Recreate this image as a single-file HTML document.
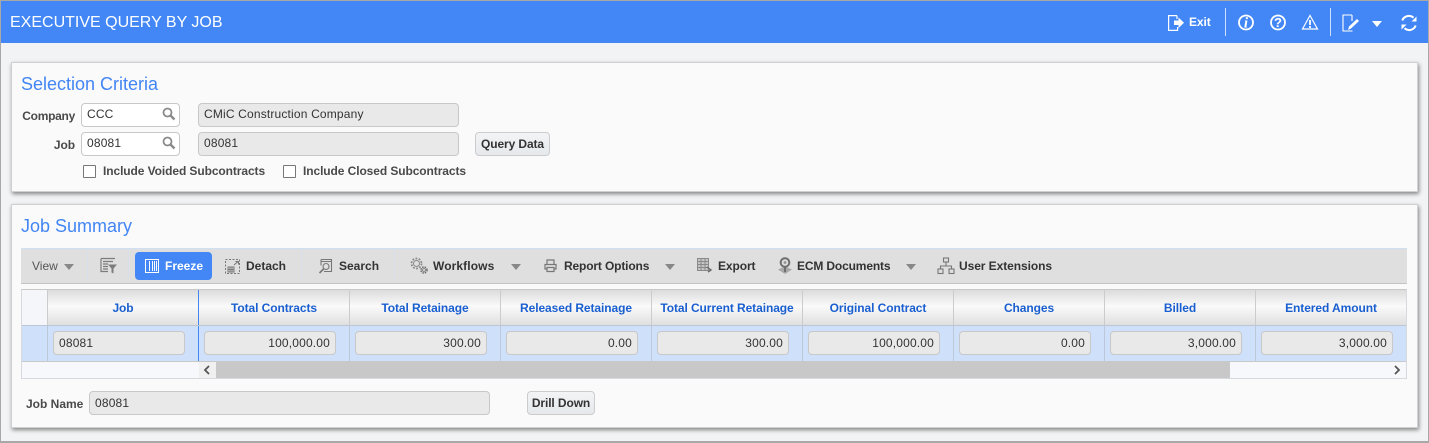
<!DOCTYPE html>
<html><head><meta charset="utf-8"><style>
*{box-sizing:border-box}
html,body{margin:0;padding:0}
body{width:1429px;height:443px;position:relative;overflow:hidden;background:#f1f3f4;font-family:"Liberation Sans",sans-serif;font-size:12px;color:#333}
.a{position:absolute;white-space:nowrap}
.panel{position:absolute;background:#fafafa;border:1px solid #d0d0d0;box-shadow:1px 2px 4px rgba(0,0,0,.45)}
.h{color:#4285f4;font-size:18px;line-height:20px}
.l{font-weight:bold;color:#4a4a4a;font-size:12px;line-height:14px;letter-spacing:-.09px}
.in{position:absolute;height:24px;border:1px solid #c8c8c8;border-radius:4px;background:#e9e9e9;font-size:12px;line-height:21px;padding:0 5px;color:#333;white-space:nowrap;letter-spacing:.17px}
.low{line-height:23px}
.w{background:#fff}
.btn{position:absolute;height:24px;border:1px solid #ccc;border-radius:4px;background:linear-gradient(#f2f4f6,#e6e9ec);font-weight:bold;font-size:12px;line-height:22px;text-align:center;color:#333;letter-spacing:-.1px}
.cb{position:absolute;width:13px;height:13px;border:1px solid #777;border-radius:1px;background:#fff}
.tb{font-weight:bold;font-size:12px;line-height:14px;color:#333;top:259px}
.tri{position:absolute;width:0;height:0;border-left:5px solid transparent;border-right:5px solid transparent;border-top:6px solid #888}
.th{position:absolute;top:290px;height:36px;border-right:1px solid #ccc;background:linear-gradient(#dcdcdc,#fafafa 45%,#dedede);color:#1a5fd0;font-weight:bold;font-size:12px;line-height:37px;text-align:center;letter-spacing:-.08px}
.td{position:absolute;top:326px;height:35px;border-right:1px solid #bcc8d8;background:#cfe0fb}
.r{text-align:right}
svg{position:absolute;overflow:visible}
</style></head><body>
<div class="a" style="left:0;top:0;width:1429px;height:443px;border:1px solid #a8a8a8;border-bottom-width:2px;z-index:5;pointer-events:none"></div>
<div class="a" style="left:1px;top:1px;width:1427px;height:42px;background:#4287f5"></div>
<div class="a" style="left:10px;top:13px;color:#fff;font-size:16px;line-height:19px">EXECUTIVE QUERY BY JOB</div>

<svg style="left:1168px;top:15px" width="18" height="16" fill="none" stroke="#fff" stroke-width="1.200"><path d="M9 .6H.6v14.800h9V12M9 .6V4"/><path d="M6 5.500h4.500V2.500L16 7.700l-5.500 5.300v-3H6z" fill="#fff" stroke="none"/></svg>
<div class="a" style="left:1189px;top:15px;color:#fff;font-weight:bold;font-size:12px;line-height:15px;letter-spacing:-.1px">Exit</div>
<div class="a" style="left:1225px;top:8px;width:1px;height:28px;background:#cfe0fb"></div>
<svg style="left:1237px;top:14px" width="18" height="18" fill="none" stroke="#fff" stroke-width="1.800"><circle cx="9" cy="8.500" r="7"/><text x="9" y="13.500" font-family="Liberation Serif" font-style="italic" font-weight="bold" font-size="15" fill="#fff" stroke="none" text-anchor="middle">i</text></svg>
<svg style="left:1269px;top:14px" width="18" height="18" fill="none" stroke="#fff" stroke-width="1.800"><circle cx="9" cy="8.500" r="7"/><text x="9" y="13" font-family="Liberation Sans" font-weight="bold" font-size="13" fill="#fff" stroke="none" text-anchor="middle">?</text></svg>
<svg style="left:1301px;top:14px" width="18" height="18" fill="none" stroke="#fff" stroke-width="1.200"><path d="M9 1.500L1.500 15h15z"/><path d="M9 6v5M9 12v2" stroke-width="1.800"/></svg>
<div class="a" style="left:1330px;top:8px;width:1px;height:28px;background:#cfe0fb"></div>
<svg style="left:1342px;top:14px" width="20" height="20" fill="none" stroke="#fff" stroke-width="1.100"><path d="M10 1H1v16h9.500M10 1v6"/><path d="M6 16l1-3.500 8-7.500 2 2-8 7.500z" fill="#fff" stroke="none"/></svg>
<div class="a" style="left:1372px;top:21px;width:0;height:0;border-left:5px solid transparent;border-right:5px solid transparent;border-top:6px solid #fff"></div>
<svg style="left:1401px;top:15px" width="16" height="16" fill="none" stroke="#fff" stroke-width="2"><path d="M1.300 5.500A7 7 0 0 1 12.500 2.700M14.700 10.500A7 7 0 0 1 3.500 13.300"/><path d="M15.500 1.500v5h-5zM.5 14.500v-5h5z" fill="#fff" stroke="none"/></svg>

<div class="panel" style="left:11px;top:62px;width:1407px;height:130px"></div>
<div class="a h" style="left:21px;top:74px">Selection Criteria</div>
<div class="a l" style="right:1354px;top:109px;letter-spacing:-.28px">Company</div>
<div class="in w" style="left:81px;top:103px;width:99px">CCC</div>
<svg style="left:162px;top:107px" width="14" height="14" fill="none" stroke="#8a8a8a" stroke-width="1.800"><circle cx="5.500" cy="5.500" r="4"/><path d="M8.500 8.500l4 4" stroke-width="2.400"/></svg>
<div class="in" style="left:198px;top:103px;width:261px">CMiC Construction Company</div>
<div class="a l" style="right:1354px;top:138px">Job</div>
<div class="in w" style="left:81px;top:132px;width:99px">08081</div>
<svg style="left:162px;top:136px" width="14" height="14" fill="none" stroke="#8a8a8a" stroke-width="1.800"><circle cx="5.500" cy="5.500" r="4"/><path d="M8.500 8.500l4 4" stroke-width="2.400"/></svg>
<div class="in" style="left:198px;top:132px;width:261px">08081</div>
<div class="btn" style="left:475px;top:132px;width:75px">Query Data</div>
<div class="cb" style="left:83px;top:165px"></div>
<div class="a l" style="left:103px;top:164px">Include Voided Subcontracts</div>
<div class="cb" style="left:283px;top:165px"></div>
<div class="a l" style="left:303px;top:164px">Include Closed Subcontracts</div>

<div class="panel" style="left:11px;top:204px;width:1407px;height:224px"></div>
<div class="a h" style="left:21px;top:216px">Job Summary</div>

<div class="a" style="left:21px;top:248px;width:1386px;height:36px;background:#dfdfdf;border-top:1px solid #cfe0f5;border-bottom:1px solid #c4c4c4"></div>
<div class="a" style="left:32px;top:259px;color:#555;line-height:14px">View</div>
<div class="tri" style="left:64px;top:264px"></div>
<div class="a" style="left:87px;top:249px;width:1px;height:33px;background:#d8dfe8"></div>
<svg style="left:100px;top:257px" width="18" height="18" fill="none" stroke="#7c7c7c" stroke-width="1.200"><path d="M1 1.500h14M1 1.500v13h7M3 4.500h10M3 7h5M3 9.500h5M3 12h5"/><path d="M8 7.500h9l-3.500 4v5l-2-1v-4z" fill="#7c7c7c" stroke="none"/></svg>
<div class="a" style="left:128px;top:249px;width:1px;height:33px;background:#d8dfe8"></div>
<div class="a" style="left:135px;top:252px;width:77px;height:28px;background:#4287f5;border-radius:4px"></div>
<svg style="left:145px;top:259px" width="15" height="15" fill="none" stroke="#fff" stroke-width="1"><rect x=".5" y=".5" width="13" height="13"/><path d="M4.500 2v10M7.500 2v10M9.500 2v10M11.500 2v10"/></svg>
<div class="a tb" style="left:165px;color:#fff">Freeze</div>
<svg style="left:225px;top:258px" width="16" height="16" fill="none" stroke="#777" stroke-width="1"><rect x=".5" y="1.500" width="14" height="14" stroke-dasharray="2 1.500"/><path d="M3 9h6v5H3zM3 11.500h6M5 9v5M7 9v5M9 7l4-3.500M10.500 3.500H13.500V6.500"/></svg>
<div class="a tb" style="left:246px">Detach</div>
<div class="a" style="left:301px;top:249px;width:1px;height:33px;background:#d8dfe8"></div>
<svg style="left:318px;top:258px" width="16" height="16" fill="none" stroke="#777" stroke-width="1.100"><path d="M3 1.500h10.500v12H6M3 1.500v6M3 3.500h10"/><circle cx="8" cy="8.500" r="3"/><path d="M6 10.500l-4.500 4.500" stroke-width="1.600"/></svg>
<div class="a tb" style="left:339px">Search</div>
<div class="a" style="left:394px;top:249px;width:1px;height:33px;background:#d8dfe8"></div>
<svg style="left:410px;top:257px" width="19" height="18" fill="none" stroke="#8a8a8a"><circle cx="6.500" cy="6.500" r="3" stroke-width="1"/><circle cx="6.500" cy="6.500" r="5" stroke-width="1.800" stroke-dasharray="1.800 1.400"/><circle cx="14" cy="13" r="1.500" stroke-width="1"/><circle cx="14" cy="13" r="3" stroke="#666" stroke-width="1.500" stroke-dasharray="1.400 1"/></svg>
<div class="a tb" style="left:433px;letter-spacing:.1px">Workflows</div>
<div class="tri" style="left:511px;top:264px"></div>
<svg style="left:544px;top:259px" width="14" height="14" fill="none" stroke="#777" stroke-width="1.200"><path d="M3 5V1h7v4M3 10H1V5.500h11V10h-2M3 8.500h7v4H3z"/></svg>
<div class="a tb" style="left:564px;letter-spacing:-.15px">Report Options</div>
<div class="tri" style="left:665px;top:264px"></div>
<svg style="left:697px;top:258px" width="16" height="15" fill="none" stroke="#8a8a8a" stroke-width="1"><rect x=".5" y=".5" width="11" height="12" fill="#c4c4c4"/><path d="M.5 3.500h11M.5 6.500h11M.5 9.500h11M4 .5v12M8 .5v12"/><path d="M10 9l4 3-3 2" stroke="#666" stroke-width="1.400"/></svg>
<div class="a tb" style="left:718px;letter-spacing:-.1px">Export</div>
<svg style="left:777px;top:257px" width="16" height="18" fill="none" stroke="#6f6f6f" stroke-width="2"><path d="M1 12.500l7-3 7 3-7 4.500z" fill="#a8a8a8" stroke="none"/><circle cx="8" cy="5.500" r="4.300" fill="#dfdfdf"/><circle cx="8" cy="5.500" r="1.500" fill="#999" stroke="none"/><path d="M8 10v5"/></svg>
<div class="a tb" style="left:797px;letter-spacing:-.15px">ECM Documents</div>
<div class="tri" style="left:906px;top:264px"></div>
<svg style="left:937px;top:257px" width="18" height="18" fill="none" stroke="#777" stroke-width="1.100"><rect x="6.500" y="1" width="5" height="4"/><rect x="1" y="12" width="5" height="4.500"/><rect x="12" y="12" width="5" height="4.500"/><path d="M9 5v4M3.500 12V9h11v3"/></svg>
<div class="a tb" style="left:959px;letter-spacing:-.07px">User Extensions</div>

<div class="a" style="left:21px;top:289px;width:1386px;height:90px;background:#f7f8fc;border:1px solid #d6d9de;border-top-color:#c8c8c8"></div>
<div class="a" style="left:22px;top:290px;width:26px;height:36px;background:#f5f6fa;border-right:1px solid #ccc"></div>
<div class="th" style="left:48px;width:151px;border-right-color:#4287f5">Job</div>
<div class="th" style="left:199px;width:151px">Total Contracts</div>
<div class="th" style="left:350px;width:151px">Total Retainage</div>
<div class="th" style="left:501px;width:151px">Released Retainage</div>
<div class="th" style="left:652px;width:151px">Total Current Retainage</div>
<div class="th" style="left:803px;width:151px">Original Contract</div>
<div class="th" style="left:954px;width:151px">Changes</div>
<div class="th" style="left:1105px;width:151px">Billed</div>
<div class="th" style="left:1256px;width:150px;border-right:0">Entered Amount</div>
<div class="a" style="left:22px;top:325px;width:1384px;height:1px;background:#bcc6d4"></div>

<div class="td" style="left:22px;width:26px"></div>
<div class="td" style="left:48px;width:151px;border-right-color:#4287f5"></div>
<div class="td" style="left:199px;width:151px"></div>
<div class="td" style="left:350px;width:151px"></div>
<div class="td" style="left:501px;width:151px"></div>
<div class="td" style="left:652px;width:151px"></div>
<div class="td" style="left:803px;width:151px"></div>
<div class="td" style="left:954px;width:151px"></div>
<div class="td" style="left:1105px;width:151px"></div>
<div class="td" style="left:1256px;width:150px;border-right:0"></div>
<div class="a" style="left:22px;top:361px;width:1384px;height:1px;background:#c8c8c8"></div>

<div class="in low" style="left:53px;top:331px;width:132px">08081</div>
<div class="in r low" style="left:204px;top:331px;width:132px">100,000.00</div>
<div class="in r low" style="left:355px;top:331px;width:132px">300.00</div>
<div class="in r low" style="left:506px;top:331px;width:132px">0.00</div>
<div class="in r low" style="left:657px;top:331px;width:132px">300.00</div>
<div class="in r low" style="left:808px;top:331px;width:132px">100,000.00</div>
<div class="in r low" style="left:959px;top:331px;width:132px">0.00</div>
<div class="in r low" style="left:1110px;top:331px;width:132px">3,000.00</div>
<div class="in r low" style="left:1261px;top:331px;width:132px">3,000.00</div>

<div class="a" style="left:199px;top:362px;width:17px;height:16px;background:#f0f0f0"></div>
<svg style="left:203px;top:365px" width="9" height="10" fill="none" stroke="#555" stroke-width="1.800"><path d="M6 1L2 5l4 4"/></svg>
<div class="a" style="left:216px;top:362px;width:1014px;height:16px;background:#c8c8c8"></div>
<svg style="left:1393px;top:365px" width="9" height="10" fill="none" stroke="#555" stroke-width="1.800"><path d="M2 1l4 4-4 4"/></svg>

<div class="a l" style="left:26px;top:397px;letter-spacing:0">Job Name</div>
<div class="in low" style="left:89px;top:391px;width:401px">08081</div>
<div class="btn" style="left:527px;top:391px;width:68px">Drill Down</div>
</body></html>
